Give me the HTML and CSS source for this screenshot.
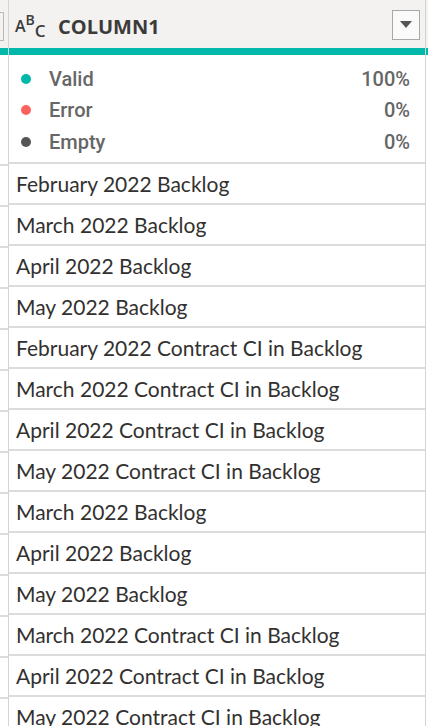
FILE: index.html
```html
<!DOCTYPE html>
<html>
<head>
<meta charset="utf-8">
<link rel="stylesheet" href="styles.css">
</head>
<body>
<div class="grid">
  <div class="stub">
    <div class="stub-head"><div class="stub-btn"></div></div>
    <div class="stub-bar"></div>
    <div class="stub-profile"></div>
    <div class="stub-rows">
      <div class="stub-row"></div><div class="stub-row"></div><div class="stub-row"></div><div class="stub-row"></div>
      <div class="stub-row"></div><div class="stub-row"></div><div class="stub-row"></div><div class="stub-row"></div>
      <div class="stub-row"></div><div class="stub-row"></div><div class="stub-row"></div><div class="stub-row"></div>
      <div class="stub-row"></div><div class="stub-row"></div>
    </div>
  </div>
  <div class="col">
    <div class="head">
      <span class="type-icon"><span class="ta">A</span><span class="tb">B</span><span class="tc">C</span></span>
      <span class="title">COLUMN1</span>
      <span class="drop">
        <svg width="12" height="7" viewBox="0 0 12 7"><path d="M0 0H12L6 7Z" fill="#555"/></svg>
      </span>
    </div>
    <div class="bar"></div>
    <div class="profile">
      <div class="stat"><span class="dot valid"></span><span class="label">Valid</span><span class="pct">100%</span></div>
      <div class="stat"><span class="dot error"></span><span class="label">Error</span><span class="pct">0%</span></div>
      <div class="stat"><span class="dot empty"></span><span class="label">Empty</span><span class="pct">0%</span></div>
    </div>
    <div class="rows">
      <div class="row">February 2022 Backlog</div>
      <div class="row">March 2022 Backlog</div>
      <div class="row">April 2022 Backlog</div>
      <div class="row">May 2022 Backlog</div>
      <div class="row">February 2022 Contract CI in Backlog</div>
      <div class="row">March 2022 Contract CI in Backlog</div>
      <div class="row">April 2022 Contract CI in Backlog</div>
      <div class="row">May 2022 Contract CI in Backlog</div>
      <div class="row">March 2022 Backlog</div>
      <div class="row">April 2022 Backlog</div>
      <div class="row">May 2022 Backlog</div>
      <div class="row">March 2022 Contract CI in Backlog</div>
      <div class="row">April 2022 Contract CI in Backlog</div>
      <div class="row">May 2022 Contract CI in Backlog</div>
    </div>
  </div>
  <div class="edge">
    <div class="edge-head"></div>
    <div class="edge-bar"></div>
  </div>
</div>
</body>
</html>
```
FILE: styles.css
```css
html, body {
  margin: 0;
  padding: 0;
  background: #ffffff;
}
body {
  width: 428px;
  height: 726px;
  overflow: hidden;
}
.grid {
  display: flex;
  align-items: flex-start;
}
.stub {
  width: 8px;
  flex: none;
  border-right: 1px solid #d4d4d4;
}
.stub-head {
  height: 48px;
  background: #f3f2f1;
  position: relative;
}
.stub-btn {
  position: absolute;
  left: -6px;
  top: 12px;
  width: 8px;
  height: 27px;
  border: 1px solid #b9b9b9;
  background: #f3f2f1;
}
.stub-bar {
  height: 7px;
  background: #01b8aa;
}
.stub-profile {
  height: 109px;
  border-bottom: 2px solid #dcdcdc;
}
.stub-row {
  height: 39px;
  border-bottom: 2px solid #dcdcdc;
}
.col {
  width: 416px;
  flex: none;
  border-right: 1px solid #d4d4d4;
}
.head {
  height: 48px;
  background: #f3f2f1;
  display: flex;
  align-items: center;
  padding: 5px 5px 0 6px;
  box-sizing: border-box;
}
.type-icon {
  display: flex;
  align-items: center;
  width: 34px;
  height: 30px;
  font-family: "Open Sans", sans-serif;
  font-weight: 600;
  color: #3b3b3b;
  line-height: 1;
}
.ta { font-size: 16px; transform: translateY(-1px); }
.tb { font-size: 14px; transform: translateY(-7px); }
.tc { font-size: 17px; transform: translateY(4px); }
.title {
  margin-left: 9px;
  font-family: "Open Sans", sans-serif;
  font-weight: 700;
  font-size: 20px;
  color: #3b3b3b;
  flex: 1;
}
.drop {
  width: 26px;
  height: 28px;
  margin-top: -4px;
  border: 1px solid #a8a8a8;
  background: #fafafa;
  display: flex;
  align-items: center;
  justify-content: center;
}
.bar {
  height: 7px;
  background: #01b8aa;
}
.profile {
  height: 109px;
  box-sizing: border-box;
  padding: 8px 15px 0 12px;
  border-bottom: 2px solid #dcdcdc;
}
.stat {
  height: 31.5px;
  display: flex;
  align-items: center;
  font-family: "Roboto", sans-serif;
  font-weight: 500;
  font-size: 20px;
  color: #666666;
}
.dot {
  width: 10px;
  height: 10px;
  border-radius: 50%;
  margin-right: 18px;
}
.dot.valid { background: #01b8aa; }
.dot.error { background: #fd625e; }
.dot.empty { background: #555555; }
.label { flex: 1; }
.pct { text-align: right; }
.row {
  height: 39px;
  border-bottom: 2px solid #dcdcdc;
  display: flex;
  align-items: center;
  padding-left: 7px;
  font-family: "Lato", sans-serif;
  font-size: 21px;
  color: #323130;
  white-space: nowrap;
}
.edge {
  width: 2px;
  flex: none;
}
.edge-head {
  height: 48px;
  background: #f3f2f1;
}
.edge-bar {
  height: 7px;
  background: #01b8aa;
}
```
